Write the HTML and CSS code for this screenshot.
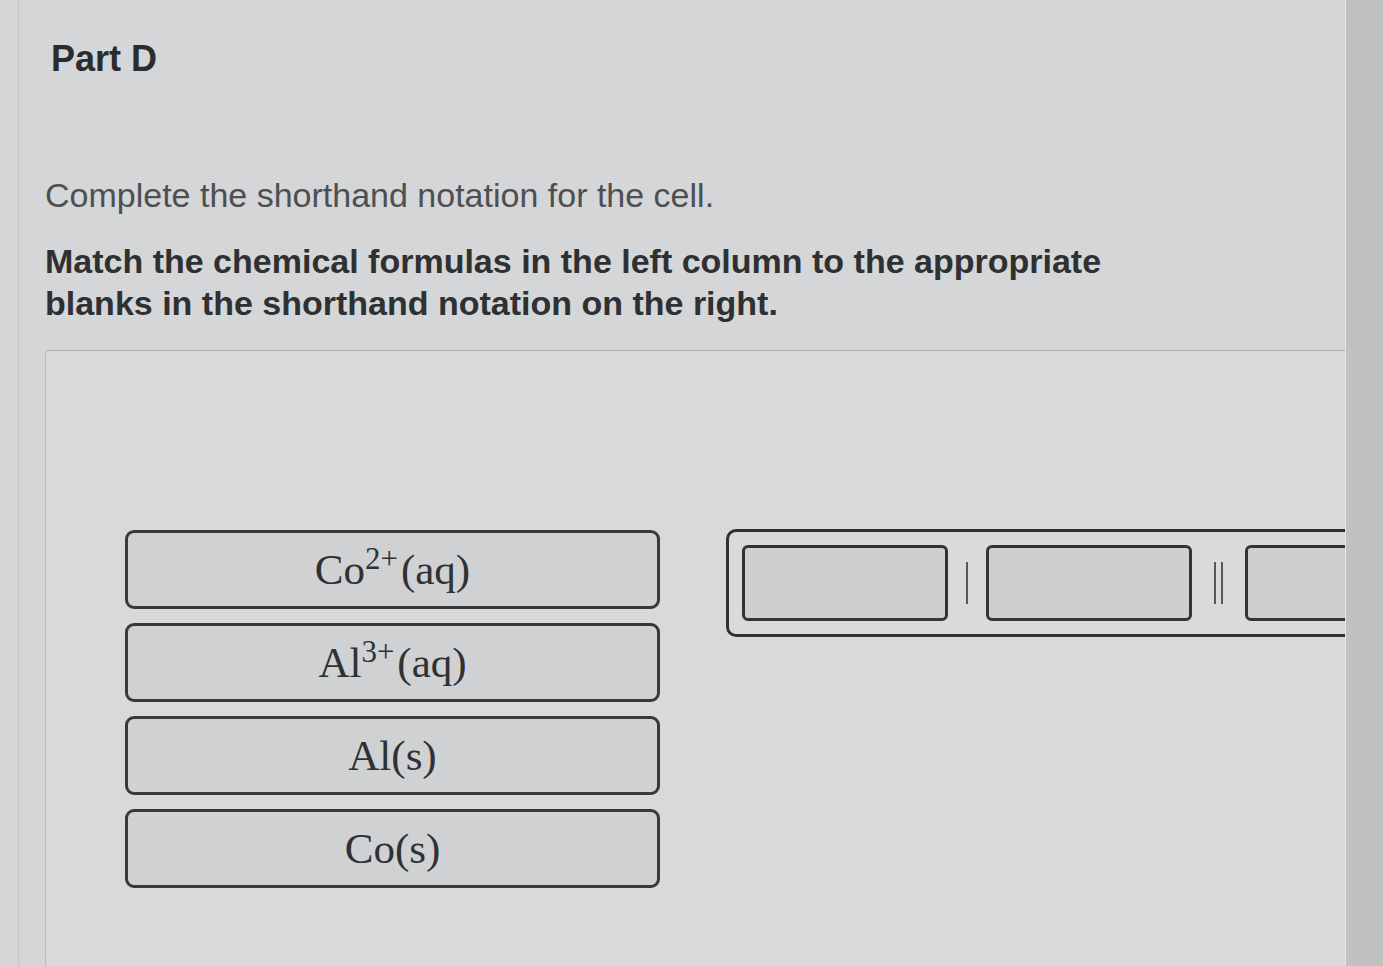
FILE: index.html
```html
<!DOCTYPE html>
<html lang="en">
<head>
    <meta charset="UTF-8">
    <meta name="viewport" content="width=device-width, initial-scale=1.0">
    <title>Part D</title>
    <link rel="stylesheet" href="styles.css">
</head>
<body>
    <div class="page">
        <h2 class="part-title">Part D</h2>

        <p class="prompt">Complete the shorthand notation for the cell.</p>
        <p class="instructions">Match the chemical formulas in the left column to the appropriate blanks in the shorthand notation on the right.</p>

        <div class="drag-area">
            <div class="choices">
                <div class="choice"><span>Co<sup>2+</sup>(aq)</span></div>
                <div class="choice"><span>Al<sup>3+</sup>(aq)</span></div>
                <div class="choice"><span>Al(s)</span></div>
                <div class="choice"><span>Co(s)</span></div>
            </div>

            <div class="notation">
                <div class="blank"></div>
                <div class="sep sep-single"><span></span></div>
                <div class="blank"></div>
                <div class="sep sep-double"><span></span><span></span></div>
                <div class="blank"></div>
                <div class="sep sep-single"><span></span></div>
                <div class="blank"></div>
            </div>
        </div>
    </div>
    <div class="scrollbar"></div>
</body>
</html>
```

FILE: styles.css
```css
html, body {
    height: 100%;
}

body {
    margin: 0;
    display: flex;
    background: #d4d6d8;
    font-family: 'Liberation Sans', Arial, sans-serif;
    color: #2e3032;
    overflow: hidden;
}

.page {
    flex: 1;
    min-width: 0;
    margin-left: 18px;
    border-left: 1px solid #c2c4c6;
    padding-left: 26px;
    overflow: hidden;
}

.scrollbar {
    flex: 0 0 37px;
    border-left: 1px solid #e4e5e6;
    background: #bfc1c3;
}

.part-title {
    margin: 38px 0 0 6px;
    font-size: 36px;
    line-height: 42px;
    font-weight: 700;
    color: #2a2c2e;
}

.prompt {
    margin: 95px 0 0 0;
    font-size: 34px;
    line-height: 40px;
    color: #4d4f51;
}

.instructions {
    margin: 25px 0 0 0;
    max-width: 1100px;
    font-size: 34px;
    line-height: 42px;
    font-weight: 700;
    color: #2e3032;
}

.drag-area {
    margin-top: 26px;
    min-height: 620px;
    border-top: 1px solid #aeb0b2;
    border-left: 1px solid #b8babc;
    border-top-left-radius: 4px;
    background: #d7d9db;
    padding: 179px 0 0 79px;
    display: flex;
    align-items: flex-start;
    gap: 66px;
}

.choices {
    width: 535px;
    flex: 0 0 535px;
    display: flex;
    flex-direction: column;
    gap: 14px;
}

.choice {
    box-sizing: border-box;
    height: 79px;
    border: 3px solid #38393b;
    border-radius: 9px;
    background: #cfd1d3;
    display: flex;
    align-items: center;
    justify-content: center;
    font-family: 'Liberation Serif', 'Times New Roman', serif;
    font-size: 43px;
    color: #2f3133;
}

.choice sup {
    font-size: 0.72em;
    line-height: 0;
    vertical-align: 0.48em;
    margin-right: 3px;
}

.notation {
    flex: 0 0 auto;
    margin-top: -1px;
    box-sizing: border-box;
    height: 108px;
    border: 3px solid #2f3032;
    border-radius: 10px;
    padding: 13px;
    display: flex;
    align-items: stretch;
    background: #d8dadc;
}

.blank {
    box-sizing: border-box;
    width: 206px;
    flex: 0 0 206px;
    border: 3px solid #333436;
    border-radius: 6px;
    background: #cdcfd1;
}

.sep {
    display: flex;
    align-items: center;
    justify-content: center;
    gap: 5px;
}

.sep span {
    width: 2px;
    height: 42px;
    background: #55575a;
}

.sep-single {
    width: 38px;
}

.sep-double {
    width: 53px;
}
```
